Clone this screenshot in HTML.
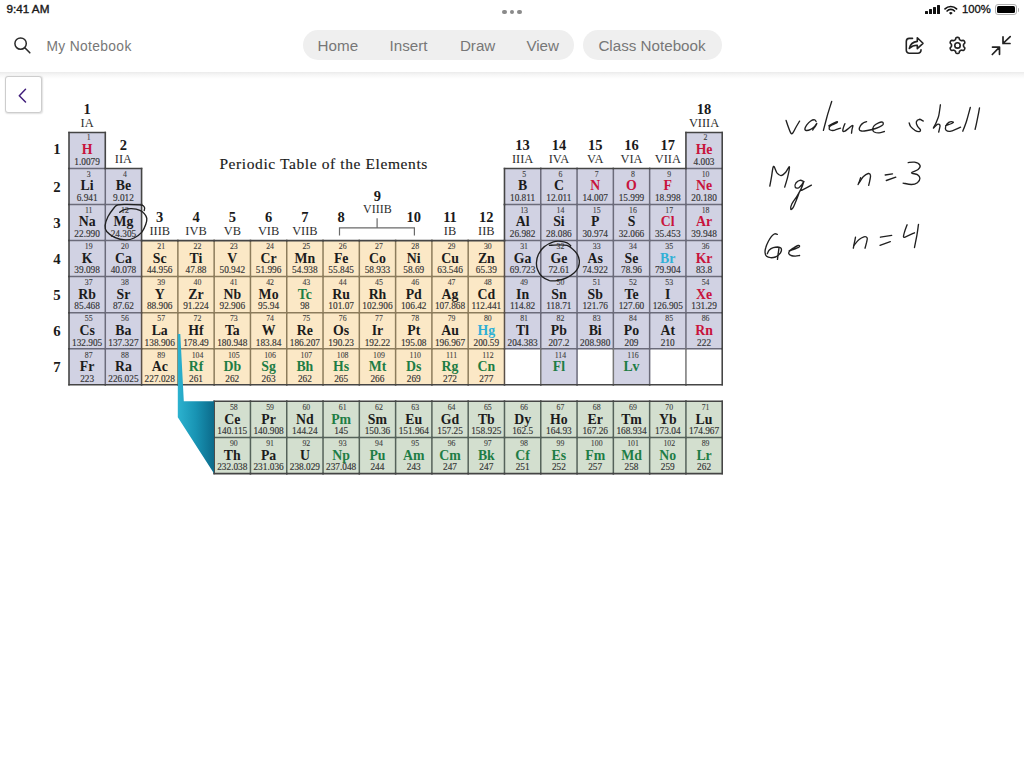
<!DOCTYPE html>
<html><head><meta charset="utf-8">
<style>
html,body{margin:0;padding:0;}
body{width:1024px;height:768px;overflow:hidden;background:#fff;position:relative;font-family:"Liberation Sans",sans-serif;}
.abs{position:absolute;white-space:nowrap;}
#tb{position:absolute;left:0;top:0;width:1024px;height:71px;background:#fff;}
#shadow{position:absolute;left:0;top:71.5px;width:1024px;height:7px;background:linear-gradient(#ebebeb,#f6f6f6 40%,#fff);}
.pill{position:absolute;top:30.3px;height:29.4px;border-radius:15px;background:#efefef;}
.tab{position:absolute;top:36.5px;font-size:15.2px;line-height:18px;color:#777;white-space:nowrap;}
.c{position:absolute;font-family:"Liberation Serif",serif;}
.c .n{position:absolute;left:-8.5px;right:-11.5px;text-align:center;top:1.1px;line-height:10px;font-size:7.8px;color:#404040;-webkit-text-stroke:0.1px #404040;}
.c .s{position:absolute;left:-10px;right:-10px;text-align:center;top:13.1px;line-height:10px;font-size:13.8px;font-weight:bold;}
.c .m{position:absolute;left:-10px;right:-10px;text-align:center;top:24.4px;line-height:10px;font-size:9.3px;color:#333;-webkit-text-stroke:0.15px #333;}
.gn{position:absolute;width:60px;text-align:center;line-height:10px;font-size:14.5px;font-weight:bold;font-family:"Liberation Serif",serif;color:#1a1a1a;}
.gr{position:absolute;width:60px;text-align:center;line-height:10px;font-size:12.4px;font-family:"Liberation Serif",serif;color:#2e2e2e;}
.pn{position:absolute;left:40px;width:34px;text-align:center;line-height:10px;font-size:14.8px;font-weight:bold;font-family:"Liberation Serif",serif;color:#1a1a1a;}
</style></head><body>
<!-- status bar / toolbar -->
<div id="tb"></div>
<div id="shadow"></div>
<div class="abs" style="left:6.5px;top:2.3px;font-size:11.7px;line-height:14px;color:#1a1a1a;-webkit-text-stroke:0.4px #1a1a1a;">9:41 AM</div>
<div class="abs" style="left:501.9px;top:9.5px;width:4.8px;height:4.8px;border-radius:2.4px;background:#8a8a8a"></div>
<div class="abs" style="left:509.6px;top:9.5px;width:4.8px;height:4.8px;border-radius:2.4px;background:#8a8a8a"></div>
<div class="abs" style="left:517.3px;top:9.5px;width:4.8px;height:4.8px;border-radius:2.4px;background:#8a8a8a"></div>
<!-- signal -->
<div class="abs" style="left:925px;top:11px;width:3px;height:3px;background:#111;border-radius:0.5px"></div>
<div class="abs" style="left:929px;top:9px;width:3px;height:5px;background:#111;border-radius:0.5px"></div>
<div class="abs" style="left:933px;top:7px;width:3px;height:7px;background:#111;border-radius:0.5px"></div>
<div class="abs" style="left:937px;top:5px;width:3px;height:9px;background:#111;border-radius:0.5px"></div>
<svg class="abs" style="left:944px;top:5px" width="13.6" height="10.2" viewBox="0 0 16 12">
<path d="M1.2 4.6 A9.5 9.5 0 0 1 14.8 4.6" stroke="#111" stroke-width="1.9" fill="none" stroke-linecap="round"/>
<path d="M3.6 7.1 A6 6 0 0 1 12.4 7.1" stroke="#111" stroke-width="1.9" fill="none" stroke-linecap="round"/>
<path d="M5.8 9.4 L8 11.5 L10.2 9.4 A3 3 0 0 0 5.8 9.4 Z" fill="#111"/>
</svg>
<div class="abs" style="left:962px;top:2.3px;font-size:11.3px;line-height:14px;color:#111;-webkit-text-stroke:0.3px #111;">100%</div>
<div class="abs" style="left:994.6px;top:4.4px;width:20px;height:8.6px;border:1px solid #b0b0b0;border-radius:3px;"></div>
<div class="abs" style="left:996.6px;top:6.4px;width:18px;height:6.6px;background:#000;border-radius:1.5px;"></div>
<div class="abs" style="left:1017.8px;top:7.7px;width:1.5px;height:4px;background:#aaa;border-radius:0 1px 1px 0"></div>
<!-- search -->
<svg class="abs" style="left:12px;top:35px" width="22" height="22" viewBox="0 0 22 22">
<circle cx="8.6" cy="8.6" r="5.7" stroke="#2a2a2a" stroke-width="1.5" fill="none"/>
<path d="M12.8 12.8 L17.8 17.8" stroke="#2a2a2a" stroke-width="1.6" stroke-linecap="round"/>
</svg>
<div class="tab" style="left:46.5px;top:38.2px;font-size:13.8px;letter-spacing:0.35px;color:#777">My Notebook</div>
<div class="pill" style="left:303px;width:271px"></div>
<div class="pill" style="left:583.4px;width:138.6px"></div>
<div class="tab" style="left:317.6px">Home</div>
<div class="tab" style="left:389.6px">Insert</div>
<div class="tab" style="left:459.9px">Draw</div>
<div class="tab" style="left:526.4px">View</div>
<div class="tab" style="left:598.4px">Class Notebook</div>
<!-- right icons -->
<svg class="abs" style="left:903px;top:35px" width="24" height="22" viewBox="0 0 24 22">
<path d="M9.5 3.4 H6.3 A3 3 0 0 0 3.3 6.4 V15.3 A3 3 0 0 0 6.3 18.3 H15 A3 3 0 0 0 18 15.3 V14.8" stroke="#222" stroke-width="1.6" fill="none" stroke-linecap="round"/>
<path d="M6.3 13.4 C7.2 9.3 9.5 7.0 14.3 6.4 V2.7 L20.0 8.3 L14.3 13.6 V10.3 C10.8 10.2 8.6 11.3 6.3 13.4 Z" stroke="#222" stroke-width="1.6" fill="none" stroke-linejoin="round"/>
</svg>
<svg class="abs" style="left:947px;top:35px" width="22" height="22" viewBox="0 0 22 22">
<path id="gear" d="M16.45 10.40 L16.45 10.56 L16.47 10.71 L16.48 10.87 L16.51 11.03 L16.55 11.20 L16.60 11.37 L16.66 11.54 L16.74 11.73 L16.86 11.93 L17.26 12.21 L17.65 12.52 L17.75 12.75 L17.79 12.98 L17.81 13.20 L17.80 13.42 L17.77 13.64 L17.72 13.84 L17.65 14.04 L17.57 14.24 L17.47 14.43 L17.36 14.60 L17.23 14.77 L17.09 14.93 L16.94 15.08 L16.77 15.21 L16.58 15.33 L16.38 15.42 L16.16 15.50 L15.91 15.53 L15.45 15.35 L15.00 15.15 L14.77 15.14 L14.57 15.16 L14.38 15.20 L14.21 15.24 L14.05 15.29 L13.90 15.35 L13.75 15.41 L13.61 15.48 L13.48 15.55 L13.34 15.63 L13.21 15.72 L13.08 15.82 L12.96 15.92 L12.83 16.04 L12.71 16.16 L12.59 16.30 L12.47 16.47 L12.36 16.67 L12.31 17.16 L12.24 17.65 L12.08 17.85 L11.91 18.01 L11.72 18.13 L11.53 18.23 L11.33 18.31 L11.13 18.37 L10.92 18.42 L10.71 18.44 L10.50 18.45 L10.29 18.44 L10.08 18.42 L9.87 18.37 L9.67 18.31 L9.47 18.23 L9.28 18.13 L9.09 18.01 L8.92 17.85 L8.76 17.65 L8.69 17.16 L8.64 16.67 L8.53 16.47 L8.41 16.30 L8.29 16.16 L8.17 16.04 L8.04 15.92 L7.92 15.82 L7.79 15.72 L7.66 15.63 L7.53 15.55 L7.39 15.48 L7.25 15.41 L7.10 15.35 L6.95 15.29 L6.79 15.24 L6.62 15.20 L6.43 15.16 L6.23 15.14 L6.00 15.15 L5.55 15.35 L5.09 15.53 L4.84 15.50 L4.62 15.42 L4.42 15.33 L4.23 15.21 L4.06 15.08 L3.91 14.93 L3.77 14.77 L3.64 14.60 L3.53 14.43 L3.43 14.24 L3.35 14.04 L3.28 13.84 L3.23 13.64 L3.20 13.42 L3.19 13.20 L3.21 12.98 L3.25 12.75 L3.35 12.52 L3.74 12.21 L4.14 11.93 L4.26 11.73 L4.34 11.54 L4.40 11.37 L4.45 11.20 L4.49 11.03 L4.52 10.87 L4.53 10.71 L4.55 10.56 L4.55 10.40 L4.55 10.24 L4.53 10.09 L4.52 9.93 L4.49 9.77 L4.45 9.60 L4.40 9.43 L4.34 9.26 L4.26 9.07 L4.14 8.87 L3.74 8.59 L3.35 8.28 L3.25 8.05 L3.21 7.82 L3.19 7.60 L3.20 7.38 L3.23 7.16 L3.28 6.96 L3.35 6.76 L3.43 6.56 L3.53 6.38 L3.64 6.20 L3.77 6.03 L3.91 5.87 L4.06 5.72 L4.23 5.59 L4.42 5.47 L4.62 5.38 L4.84 5.30 L5.09 5.27 L5.55 5.45 L6.00 5.65 L6.23 5.66 L6.43 5.64 L6.62 5.60 L6.79 5.56 L6.95 5.51 L7.10 5.45 L7.25 5.39 L7.39 5.32 L7.52 5.25 L7.66 5.17 L7.79 5.08 L7.92 4.98 L8.04 4.88 L8.17 4.76 L8.29 4.64 L8.41 4.50 L8.53 4.33 L8.64 4.13 L8.69 3.64 L8.76 3.15 L8.92 2.95 L9.09 2.79 L9.28 2.67 L9.47 2.57 L9.67 2.49 L9.87 2.43 L10.08 2.38 L10.29 2.36 L10.50 2.35 L10.71 2.36 L10.92 2.38 L11.13 2.43 L11.33 2.49 L11.53 2.57 L11.72 2.67 L11.91 2.79 L12.08 2.95 L12.24 3.15 L12.31 3.64 L12.36 4.13 L12.47 4.33 L12.59 4.50 L12.71 4.64 L12.83 4.76 L12.96 4.88 L13.08 4.98 L13.21 5.08 L13.34 5.17 L13.48 5.25 L13.61 5.32 L13.75 5.39 L13.90 5.45 L14.05 5.51 L14.21 5.56 L14.38 5.60 L14.57 5.64 L14.77 5.66 L15.00 5.65 L15.45 5.45 L15.91 5.27 L16.16 5.30 L16.38 5.38 L16.58 5.47 L16.77 5.59 L16.94 5.72 L17.09 5.87 L17.23 6.03 L17.36 6.20 L17.47 6.38 L17.57 6.56 L17.65 6.76 L17.72 6.96 L17.77 7.16 L17.80 7.38 L17.81 7.60 L17.79 7.82 L17.75 8.05 L17.65 8.28 L17.26 8.59 L16.86 8.87 L16.74 9.07 L16.66 9.26 L16.60 9.43 L16.55 9.60 L16.51 9.77 L16.48 9.93 L16.47 10.09 L16.45 10.24 Z" stroke-linejoin="round" stroke="#222" stroke-width="1.6" fill="none"/>
<circle cx="10.5" cy="10.4" r="2.7" stroke="#222" stroke-width="1.6" fill="none"/>
</svg>
<svg class="abs" style="left:990px;top:34px" width="24" height="23" viewBox="0 0 24 23">
<path d="M13 2.9 V9.5 H20 M13 9.5 L20.2 2.7" stroke="#222" stroke-width="1.7" fill="none" stroke-linecap="round" stroke-linejoin="round"/>
<path d="M2.5 13.1 H9.5 V20.3 M9.5 13.1 L2.3 20.5" stroke="#222" stroke-width="1.7" fill="none" stroke-linecap="round" stroke-linejoin="round"/>
</svg>
<!-- back button -->
<div class="abs" style="left:4.5px;top:76.3px;width:37px;height:37px;box-sizing:border-box;border:1px solid #cdcdcd;border-radius:3px;background:#fff;box-shadow:0.5px 0.5px 1.5px rgba(0,0,0,0.12)"></div>
<svg class="abs" style="left:16px;top:87px" width="12" height="16" viewBox="0 0 12 16">
<path d="M9.5 2.3 L3.3 8.7 L9.5 15" stroke="#3f1c7a" stroke-width="1.45" fill="none" stroke-linecap="round" stroke-linejoin="round"/>
</svg>
<!-- periodic table -->
<div class="abs" style="left:219.4px;top:155.1px;font-family:'Liberation Serif',serif;font-size:15.5px;line-height:18px;letter-spacing:0.6px;color:#1a1a1a;-webkit-text-stroke:0.15px #1a1a1a;">Periodic Table of the Elements</div>
<div class="gn" style="left:57.14px;top:103.90px">1</div>
<div class="gr" style="left:57.14px;top:117.60px">IA</div>
<div class="gn" style="left:93.43px;top:139.93px">2</div>
<div class="gr" style="left:93.43px;top:153.63px">IIA</div>
<div class="gn" style="left:129.72px;top:211.99px">3</div>
<div class="gr" style="left:129.72px;top:225.69px">IIIB</div>
<div class="gn" style="left:166.02px;top:211.99px">4</div>
<div class="gr" style="left:166.02px;top:225.69px">IVB</div>
<div class="gn" style="left:202.31px;top:211.99px">5</div>
<div class="gr" style="left:202.31px;top:225.69px">VB</div>
<div class="gn" style="left:238.59px;top:211.99px">6</div>
<div class="gr" style="left:238.59px;top:225.69px">VIB</div>
<div class="gn" style="left:274.88px;top:211.99px">7</div>
<div class="gr" style="left:274.88px;top:225.69px">VIIB</div>
<div class="gn" style="left:311.17px;top:211.99px">8</div>
<div class="gn" style="left:383.75px;top:211.99px">10</div>
<div class="gn" style="left:420.04px;top:211.99px">11</div>
<div class="gr" style="left:420.04px;top:225.69px">IB</div>
<div class="gn" style="left:456.33px;top:211.99px">12</div>
<div class="gr" style="left:456.33px;top:225.69px">IIB</div>
<div class="gn" style="left:492.62px;top:139.93px">13</div>
<div class="gr" style="left:492.62px;top:153.63px">IIIA</div>
<div class="gn" style="left:528.91px;top:139.93px">14</div>
<div class="gr" style="left:528.91px;top:153.63px">IVA</div>
<div class="gn" style="left:565.20px;top:139.93px">15</div>
<div class="gr" style="left:565.20px;top:153.63px">VA</div>
<div class="gn" style="left:601.50px;top:139.93px">16</div>
<div class="gr" style="left:601.50px;top:153.63px">VIA</div>
<div class="gn" style="left:637.78px;top:139.93px">17</div>
<div class="gr" style="left:637.78px;top:153.63px">VIIA</div>
<div class="gn" style="left:674.07px;top:103.90px">18</div>
<div class="gr" style="left:674.07px;top:117.60px">VIIIA</div>
<div class="gn" style="left:347.46px;top:191.09px">9</div>
<div class="gr" style="left:347.46px;top:204.29px;font-size:12.0px">VIIIB</div>
<div class="pn" style="top:143.50px">1</div>
<div class="pn" style="top:181.83px">2</div>
<div class="pn" style="top:217.86px">3</div>
<div class="pn" style="top:253.89px">4</div>
<div class="pn" style="top:289.92px">5</div>
<div class="pn" style="top:325.95px">6</div>
<div class="pn" style="top:361.98px">7</div>
<div class="c" style="left:69.00px;top:132.50px;width:36.29px;height:36.03px;background:#d1d2e3"><div class="n" style="top:0.90px">1</div><div class="s" style="color:#c8143c;top:12.20px">H</div><div class="m" style="top:24.10px">1.0079</div></div>
<div class="c" style="left:685.93px;top:132.50px;width:36.29px;height:36.03px;background:#d1d2e3"><div class="n" style="top:0.90px">2</div><div class="s" style="color:#c8143c;top:12.20px">He</div><div class="m" style="top:24.10px">4.003</div></div>
<div class="c" style="left:69.00px;top:168.53px;width:36.29px;height:36.03px;background:#d1d2e3"><div class="n" style="top:1.08px">3</div><div class="s" style="color:#1c1c1c;top:12.45px">Li</div><div class="m" style="top:24.28px">6.941</div></div>
<div class="c" style="left:105.29px;top:168.53px;width:36.29px;height:36.03px;background:#d1d2e3"><div class="n" style="top:1.08px">4</div><div class="s" style="color:#1c1c1c;top:12.45px">Be</div><div class="m" style="top:24.28px">9.012</div></div>
<div class="c" style="left:504.48px;top:168.53px;width:36.29px;height:36.03px;background:#d1d2e3"><div class="n" style="top:1.08px">5</div><div class="s" style="color:#1c1c1c;top:12.45px">B</div><div class="m" style="top:24.28px">10.811</div></div>
<div class="c" style="left:540.77px;top:168.53px;width:36.29px;height:36.03px;background:#d1d2e3"><div class="n" style="top:1.08px">6</div><div class="s" style="color:#1c1c1c;top:12.45px">C</div><div class="m" style="top:24.28px">12.011</div></div>
<div class="c" style="left:577.06px;top:168.53px;width:36.29px;height:36.03px;background:#d1d2e3"><div class="n" style="top:1.08px">7</div><div class="s" style="color:#c8143c;top:12.45px">N</div><div class="m" style="top:24.28px">14.007</div></div>
<div class="c" style="left:613.35px;top:168.53px;width:36.29px;height:36.03px;background:#d1d2e3"><div class="n" style="top:1.08px">8</div><div class="s" style="color:#c8143c;top:12.45px">O</div><div class="m" style="top:24.28px">15.999</div></div>
<div class="c" style="left:649.64px;top:168.53px;width:36.29px;height:36.03px;background:#d1d2e3"><div class="n" style="top:1.08px">9</div><div class="s" style="color:#c8143c;top:12.45px">F</div><div class="m" style="top:24.28px">18.998</div></div>
<div class="c" style="left:685.93px;top:168.53px;width:36.29px;height:36.03px;background:#d1d2e3"><div class="n" style="top:1.08px">10</div><div class="s" style="color:#c8143c;top:12.45px">Ne</div><div class="m" style="top:24.28px">20.180</div></div>
<div class="c" style="left:69.00px;top:204.56px;width:36.29px;height:36.03px;background:#d1d2e3"><div class="n" style="top:1.26px">11</div><div class="s" style="color:#1c1c1c;top:12.70px">Na</div><div class="m" style="top:24.46px">22.990</div></div>
<div class="c" style="left:105.29px;top:204.56px;width:36.29px;height:36.03px;background:#d1d2e3"><div class="n" style="top:1.26px">12</div><div class="s" style="color:#1c1c1c;top:12.70px">Mg</div><div class="m" style="top:24.46px">24.305</div></div>
<div class="c" style="left:504.48px;top:204.56px;width:36.29px;height:36.03px;background:#d1d2e3"><div class="n" style="top:1.26px">13</div><div class="s" style="color:#1c1c1c;top:12.70px">Al</div><div class="m" style="top:24.46px">26.982</div></div>
<div class="c" style="left:540.77px;top:204.56px;width:36.29px;height:36.03px;background:#d1d2e3"><div class="n" style="top:1.26px">14</div><div class="s" style="color:#1c1c1c;top:12.70px">Si</div><div class="m" style="top:24.46px">28.086</div></div>
<div class="c" style="left:577.06px;top:204.56px;width:36.29px;height:36.03px;background:#d1d2e3"><div class="n" style="top:1.26px">15</div><div class="s" style="color:#1c1c1c;top:12.70px">P</div><div class="m" style="top:24.46px">30.974</div></div>
<div class="c" style="left:613.35px;top:204.56px;width:36.29px;height:36.03px;background:#d1d2e3"><div class="n" style="top:1.26px">16</div><div class="s" style="color:#1c1c1c;top:12.70px">S</div><div class="m" style="top:24.46px">32.066</div></div>
<div class="c" style="left:649.64px;top:204.56px;width:36.29px;height:36.03px;background:#d1d2e3"><div class="n" style="top:1.26px">17</div><div class="s" style="color:#c8143c;top:12.70px">Cl</div><div class="m" style="top:24.46px">35.453</div></div>
<div class="c" style="left:685.93px;top:204.56px;width:36.29px;height:36.03px;background:#d1d2e3"><div class="n" style="top:1.26px">18</div><div class="s" style="color:#c8143c;top:12.70px">Ar</div><div class="m" style="top:24.46px">39.948</div></div>
<div class="c" style="left:69.00px;top:240.59px;width:36.29px;height:36.03px;background:#d1d2e3"><div class="n" style="top:1.44px">19</div><div class="s" style="color:#1c1c1c;top:12.95px">K</div><div class="m" style="top:24.64px">39.098</div></div>
<div class="c" style="left:105.29px;top:240.59px;width:36.29px;height:36.03px;background:#d1d2e3"><div class="n" style="top:1.44px">20</div><div class="s" style="color:#1c1c1c;top:12.95px">Ca</div><div class="m" style="top:24.64px">40.078</div></div>
<div class="c" style="left:141.58px;top:240.59px;width:36.29px;height:36.03px;background:#fbe8c6"><div class="n" style="top:1.44px">21</div><div class="s" style="color:#1c1c1c;top:12.95px">Sc</div><div class="m" style="top:24.64px">44.956</div></div>
<div class="c" style="left:177.87px;top:240.59px;width:36.29px;height:36.03px;background:#fbe8c6"><div class="n" style="top:1.44px">22</div><div class="s" style="color:#1c1c1c;top:12.95px">Ti</div><div class="m" style="top:24.64px">47.88</div></div>
<div class="c" style="left:214.16px;top:240.59px;width:36.29px;height:36.03px;background:#fbe8c6"><div class="n" style="top:1.44px">23</div><div class="s" style="color:#1c1c1c;top:12.95px">V</div><div class="m" style="top:24.64px">50.942</div></div>
<div class="c" style="left:250.45px;top:240.59px;width:36.29px;height:36.03px;background:#fbe8c6"><div class="n" style="top:1.44px">24</div><div class="s" style="color:#1c1c1c;top:12.95px">Cr</div><div class="m" style="top:24.64px">51.996</div></div>
<div class="c" style="left:286.74px;top:240.59px;width:36.29px;height:36.03px;background:#fbe8c6"><div class="n" style="top:1.44px">25</div><div class="s" style="color:#1c1c1c;top:12.95px">Mn</div><div class="m" style="top:24.64px">54.938</div></div>
<div class="c" style="left:323.03px;top:240.59px;width:36.29px;height:36.03px;background:#fbe8c6"><div class="n" style="top:1.44px">26</div><div class="s" style="color:#1c1c1c;top:12.95px">Fe</div><div class="m" style="top:24.64px">55.845</div></div>
<div class="c" style="left:359.32px;top:240.59px;width:36.29px;height:36.03px;background:#fbe8c6"><div class="n" style="top:1.44px">27</div><div class="s" style="color:#1c1c1c;top:12.95px">Co</div><div class="m" style="top:24.64px">58.933</div></div>
<div class="c" style="left:395.61px;top:240.59px;width:36.29px;height:36.03px;background:#fbe8c6"><div class="n" style="top:1.44px">28</div><div class="s" style="color:#1c1c1c;top:12.95px">Ni</div><div class="m" style="top:24.64px">58.69</div></div>
<div class="c" style="left:431.90px;top:240.59px;width:36.29px;height:36.03px;background:#fbe8c6"><div class="n" style="top:1.44px">29</div><div class="s" style="color:#1c1c1c;top:12.95px">Cu</div><div class="m" style="top:24.64px">63.546</div></div>
<div class="c" style="left:468.19px;top:240.59px;width:36.29px;height:36.03px;background:#fbe8c6"><div class="n" style="top:1.44px">30</div><div class="s" style="color:#1c1c1c;top:12.95px">Zn</div><div class="m" style="top:24.64px">65.39</div></div>
<div class="c" style="left:504.48px;top:240.59px;width:36.29px;height:36.03px;background:#d1d2e3"><div class="n" style="top:1.44px">31</div><div class="s" style="color:#1c1c1c;top:12.95px">Ga</div><div class="m" style="top:24.64px">69.723</div></div>
<div class="c" style="left:540.77px;top:240.59px;width:36.29px;height:36.03px;background:#d1d2e3"><div class="n" style="top:1.44px">32</div><div class="s" style="color:#1c1c1c;top:12.95px">Ge</div><div class="m" style="top:24.64px">72.61</div></div>
<div class="c" style="left:577.06px;top:240.59px;width:36.29px;height:36.03px;background:#d1d2e3"><div class="n" style="top:1.44px">33</div><div class="s" style="color:#1c1c1c;top:12.95px">As</div><div class="m" style="top:24.64px">74.922</div></div>
<div class="c" style="left:613.35px;top:240.59px;width:36.29px;height:36.03px;background:#d1d2e3"><div class="n" style="top:1.44px">34</div><div class="s" style="color:#1c1c1c;top:12.95px">Se</div><div class="m" style="top:24.64px">78.96</div></div>
<div class="c" style="left:649.64px;top:240.59px;width:36.29px;height:36.03px;background:#d1d2e3"><div class="n" style="top:1.44px">35</div><div class="s" style="color:#2fb0d6;top:12.95px">Br</div><div class="m" style="top:24.64px">79.904</div></div>
<div class="c" style="left:685.93px;top:240.59px;width:36.29px;height:36.03px;background:#d1d2e3"><div class="n" style="top:1.44px">36</div><div class="s" style="color:#c8143c;top:12.95px">Kr</div><div class="m" style="top:24.64px">83.8</div></div>
<div class="c" style="left:69.00px;top:276.62px;width:36.29px;height:36.03px;background:#d1d2e3"><div class="n" style="top:1.62px">37</div><div class="s" style="color:#1c1c1c;top:13.20px">Rb</div><div class="m" style="top:24.82px">85.468</div></div>
<div class="c" style="left:105.29px;top:276.62px;width:36.29px;height:36.03px;background:#d1d2e3"><div class="n" style="top:1.62px">38</div><div class="s" style="color:#1c1c1c;top:13.20px">Sr</div><div class="m" style="top:24.82px">87.62</div></div>
<div class="c" style="left:141.58px;top:276.62px;width:36.29px;height:36.03px;background:#fbe8c6"><div class="n" style="top:1.62px">39</div><div class="s" style="color:#1c1c1c;top:13.20px">Y</div><div class="m" style="top:24.82px">88.906</div></div>
<div class="c" style="left:177.87px;top:276.62px;width:36.29px;height:36.03px;background:#fbe8c6"><div class="n" style="top:1.62px">40</div><div class="s" style="color:#1c1c1c;top:13.20px">Zr</div><div class="m" style="top:24.82px">91.224</div></div>
<div class="c" style="left:214.16px;top:276.62px;width:36.29px;height:36.03px;background:#fbe8c6"><div class="n" style="top:1.62px">41</div><div class="s" style="color:#1c1c1c;top:13.20px">Nb</div><div class="m" style="top:24.82px">92.906</div></div>
<div class="c" style="left:250.45px;top:276.62px;width:36.29px;height:36.03px;background:#fbe8c6"><div class="n" style="top:1.62px">42</div><div class="s" style="color:#1c1c1c;top:13.20px">Mo</div><div class="m" style="top:24.82px">95.94</div></div>
<div class="c" style="left:286.74px;top:276.62px;width:36.29px;height:36.03px;background:#fbe8c6"><div class="n" style="top:1.62px">43</div><div class="s" style="color:#1e7d45;top:13.20px">Tc</div><div class="m" style="top:24.82px">98</div></div>
<div class="c" style="left:323.03px;top:276.62px;width:36.29px;height:36.03px;background:#fbe8c6"><div class="n" style="top:1.62px">44</div><div class="s" style="color:#1c1c1c;top:13.20px">Ru</div><div class="m" style="top:24.82px">101.07</div></div>
<div class="c" style="left:359.32px;top:276.62px;width:36.29px;height:36.03px;background:#fbe8c6"><div class="n" style="top:1.62px">45</div><div class="s" style="color:#1c1c1c;top:13.20px">Rh</div><div class="m" style="top:24.82px">102.906</div></div>
<div class="c" style="left:395.61px;top:276.62px;width:36.29px;height:36.03px;background:#fbe8c6"><div class="n" style="top:1.62px">46</div><div class="s" style="color:#1c1c1c;top:13.20px">Pd</div><div class="m" style="top:24.82px">106.42</div></div>
<div class="c" style="left:431.90px;top:276.62px;width:36.29px;height:36.03px;background:#fbe8c6"><div class="n" style="top:1.62px">47</div><div class="s" style="color:#1c1c1c;top:13.20px">Ag</div><div class="m" style="top:24.82px">107.868</div></div>
<div class="c" style="left:468.19px;top:276.62px;width:36.29px;height:36.03px;background:#fbe8c6"><div class="n" style="top:1.62px">48</div><div class="s" style="color:#1c1c1c;top:13.20px">Cd</div><div class="m" style="top:24.82px">112.441</div></div>
<div class="c" style="left:504.48px;top:276.62px;width:36.29px;height:36.03px;background:#d1d2e3"><div class="n" style="top:1.62px">49</div><div class="s" style="color:#1c1c1c;top:13.20px">In</div><div class="m" style="top:24.82px">114.82</div></div>
<div class="c" style="left:540.77px;top:276.62px;width:36.29px;height:36.03px;background:#d1d2e3"><div class="n" style="top:1.62px">50</div><div class="s" style="color:#1c1c1c;top:13.20px">Sn</div><div class="m" style="top:24.82px">118.71</div></div>
<div class="c" style="left:577.06px;top:276.62px;width:36.29px;height:36.03px;background:#d1d2e3"><div class="n" style="top:1.62px">51</div><div class="s" style="color:#1c1c1c;top:13.20px">Sb</div><div class="m" style="top:24.82px">121.76</div></div>
<div class="c" style="left:613.35px;top:276.62px;width:36.29px;height:36.03px;background:#d1d2e3"><div class="n" style="top:1.62px">52</div><div class="s" style="color:#1c1c1c;top:13.20px">Te</div><div class="m" style="top:24.82px">127.60</div></div>
<div class="c" style="left:649.64px;top:276.62px;width:36.29px;height:36.03px;background:#d1d2e3"><div class="n" style="top:1.62px">53</div><div class="s" style="color:#1c1c1c;top:13.20px">I</div><div class="m" style="top:24.82px">126.905</div></div>
<div class="c" style="left:685.93px;top:276.62px;width:36.29px;height:36.03px;background:#d1d2e3"><div class="n" style="top:1.62px">54</div><div class="s" style="color:#c8143c;top:13.20px">Xe</div><div class="m" style="top:24.82px">131.29</div></div>
<div class="c" style="left:69.00px;top:312.65px;width:36.29px;height:36.03px;background:#d1d2e3"><div class="n" style="top:1.80px">55</div><div class="s" style="color:#1c1c1c;top:13.45px">Cs</div><div class="m" style="top:25.00px">132.905</div></div>
<div class="c" style="left:105.29px;top:312.65px;width:36.29px;height:36.03px;background:#d1d2e3"><div class="n" style="top:1.80px">56</div><div class="s" style="color:#1c1c1c;top:13.45px">Ba</div><div class="m" style="top:25.00px">137.327</div></div>
<div class="c" style="left:141.58px;top:312.65px;width:36.29px;height:36.03px;background:#fbe8c6"><div class="n" style="top:1.80px">57</div><div class="s" style="color:#1c1c1c;top:13.45px">La</div><div class="m" style="top:25.00px">138.906</div></div>
<div class="c" style="left:177.87px;top:312.65px;width:36.29px;height:36.03px;background:#fbe8c6"><div class="n" style="top:1.80px">72</div><div class="s" style="color:#1c1c1c;top:13.45px">Hf</div><div class="m" style="top:25.00px">178.49</div></div>
<div class="c" style="left:214.16px;top:312.65px;width:36.29px;height:36.03px;background:#fbe8c6"><div class="n" style="top:1.80px">73</div><div class="s" style="color:#1c1c1c;top:13.45px">Ta</div><div class="m" style="top:25.00px">180.948</div></div>
<div class="c" style="left:250.45px;top:312.65px;width:36.29px;height:36.03px;background:#fbe8c6"><div class="n" style="top:1.80px">74</div><div class="s" style="color:#1c1c1c;top:13.45px">W</div><div class="m" style="top:25.00px">183.84</div></div>
<div class="c" style="left:286.74px;top:312.65px;width:36.29px;height:36.03px;background:#fbe8c6"><div class="n" style="top:1.80px">75</div><div class="s" style="color:#1c1c1c;top:13.45px">Re</div><div class="m" style="top:25.00px">186.207</div></div>
<div class="c" style="left:323.03px;top:312.65px;width:36.29px;height:36.03px;background:#fbe8c6"><div class="n" style="top:1.80px">76</div><div class="s" style="color:#1c1c1c;top:13.45px">Os</div><div class="m" style="top:25.00px">190.23</div></div>
<div class="c" style="left:359.32px;top:312.65px;width:36.29px;height:36.03px;background:#fbe8c6"><div class="n" style="top:1.80px">77</div><div class="s" style="color:#1c1c1c;top:13.45px">Ir</div><div class="m" style="top:25.00px">192.22</div></div>
<div class="c" style="left:395.61px;top:312.65px;width:36.29px;height:36.03px;background:#fbe8c6"><div class="n" style="top:1.80px">78</div><div class="s" style="color:#1c1c1c;top:13.45px">Pt</div><div class="m" style="top:25.00px">195.08</div></div>
<div class="c" style="left:431.90px;top:312.65px;width:36.29px;height:36.03px;background:#fbe8c6"><div class="n" style="top:1.80px">79</div><div class="s" style="color:#1c1c1c;top:13.45px">Au</div><div class="m" style="top:25.00px">196.967</div></div>
<div class="c" style="left:468.19px;top:312.65px;width:36.29px;height:36.03px;background:#fbe8c6"><div class="n" style="top:1.80px">80</div><div class="s" style="color:#2fb0d6;top:13.45px">Hg</div><div class="m" style="top:25.00px">200.59</div></div>
<div class="c" style="left:504.48px;top:312.65px;width:36.29px;height:36.03px;background:#d1d2e3"><div class="n" style="top:1.80px">81</div><div class="s" style="color:#1c1c1c;top:13.45px">Tl</div><div class="m" style="top:25.00px">204.383</div></div>
<div class="c" style="left:540.77px;top:312.65px;width:36.29px;height:36.03px;background:#d1d2e3"><div class="n" style="top:1.80px">82</div><div class="s" style="color:#1c1c1c;top:13.45px">Pb</div><div class="m" style="top:25.00px">207.2</div></div>
<div class="c" style="left:577.06px;top:312.65px;width:36.29px;height:36.03px;background:#d1d2e3"><div class="n" style="top:1.80px">83</div><div class="s" style="color:#1c1c1c;top:13.45px">Bi</div><div class="m" style="top:25.00px">208.980</div></div>
<div class="c" style="left:613.35px;top:312.65px;width:36.29px;height:36.03px;background:#d1d2e3"><div class="n" style="top:1.80px">84</div><div class="s" style="color:#1c1c1c;top:13.45px">Po</div><div class="m" style="top:25.00px">209</div></div>
<div class="c" style="left:649.64px;top:312.65px;width:36.29px;height:36.03px;background:#d1d2e3"><div class="n" style="top:1.80px">85</div><div class="s" style="color:#1c1c1c;top:13.45px">At</div><div class="m" style="top:25.00px">210</div></div>
<div class="c" style="left:685.93px;top:312.65px;width:36.29px;height:36.03px;background:#d1d2e3"><div class="n" style="top:1.80px">86</div><div class="s" style="color:#c8143c;top:13.45px">Rn</div><div class="m" style="top:25.00px">222</div></div>
<div class="c" style="left:69.00px;top:348.68px;width:36.29px;height:36.03px;background:#d1d2e3"><div class="n" style="top:1.98px">87</div><div class="s" style="color:#1c1c1c;top:13.70px">Fr</div><div class="m" style="top:25.18px">223</div></div>
<div class="c" style="left:105.29px;top:348.68px;width:36.29px;height:36.03px;background:#d1d2e3"><div class="n" style="top:1.98px">88</div><div class="s" style="color:#1c1c1c;top:13.70px">Ra</div><div class="m" style="top:25.18px">226.025</div></div>
<div class="c" style="left:141.58px;top:348.68px;width:36.29px;height:36.03px;background:#fbe8c6"><div class="n" style="top:1.98px">89</div><div class="s" style="color:#1c1c1c;top:13.70px">Ac</div><div class="m" style="top:25.18px">227.028</div></div>
<div class="c" style="left:177.87px;top:348.68px;width:36.29px;height:36.03px;background:#fbe8c6"><div class="n" style="top:1.98px">104</div><div class="s" style="color:#1e7d45;top:13.70px">Rf</div><div class="m" style="top:25.18px">261</div></div>
<div class="c" style="left:214.16px;top:348.68px;width:36.29px;height:36.03px;background:#fbe8c6"><div class="n" style="top:1.98px">105</div><div class="s" style="color:#1e7d45;top:13.70px">Db</div><div class="m" style="top:25.18px">262</div></div>
<div class="c" style="left:250.45px;top:348.68px;width:36.29px;height:36.03px;background:#fbe8c6"><div class="n" style="top:1.98px">106</div><div class="s" style="color:#1e7d45;top:13.70px">Sg</div><div class="m" style="top:25.18px">263</div></div>
<div class="c" style="left:286.74px;top:348.68px;width:36.29px;height:36.03px;background:#fbe8c6"><div class="n" style="top:1.98px">107</div><div class="s" style="color:#1e7d45;top:13.70px">Bh</div><div class="m" style="top:25.18px">262</div></div>
<div class="c" style="left:323.03px;top:348.68px;width:36.29px;height:36.03px;background:#fbe8c6"><div class="n" style="top:1.98px">108</div><div class="s" style="color:#1e7d45;top:13.70px">Hs</div><div class="m" style="top:25.18px">265</div></div>
<div class="c" style="left:359.32px;top:348.68px;width:36.29px;height:36.03px;background:#fbe8c6"><div class="n" style="top:1.98px">109</div><div class="s" style="color:#1e7d45;top:13.70px">Mt</div><div class="m" style="top:25.18px">266</div></div>
<div class="c" style="left:395.61px;top:348.68px;width:36.29px;height:36.03px;background:#fbe8c6"><div class="n" style="top:1.98px">110</div><div class="s" style="color:#1e7d45;top:13.70px">Ds</div><div class="m" style="top:25.18px">269</div></div>
<div class="c" style="left:431.90px;top:348.68px;width:36.29px;height:36.03px;background:#fbe8c6"><div class="n" style="top:1.98px">111</div><div class="s" style="color:#1e7d45;top:13.70px">Rg</div><div class="m" style="top:25.18px">272</div></div>
<div class="c" style="left:468.19px;top:348.68px;width:36.29px;height:36.03px;background:#fbe8c6"><div class="n" style="top:1.98px">112</div><div class="s" style="color:#1e7d45;top:13.70px">Cn</div><div class="m" style="top:25.18px">277</div></div>
<div class="c" style="left:504.48px;top:348.68px;width:36.29px;height:36.03px;background:#ffffff"></div>
<div class="c" style="left:540.77px;top:348.68px;width:36.29px;height:36.03px;background:#d1d2e3"><div class="n" style="top:1.98px">114</div><div class="s" style="color:#1e7d45;top:13.70px">Fl</div></div>
<div class="c" style="left:577.06px;top:348.68px;width:36.29px;height:36.03px;background:#ffffff"></div>
<div class="c" style="left:613.35px;top:348.68px;width:36.29px;height:36.03px;background:#d1d2e3"><div class="n" style="top:1.98px">116</div><div class="s" style="color:#1e7d45;top:13.70px">Lv</div></div>
<div class="c" style="left:649.64px;top:348.68px;width:36.29px;height:36.03px;background:#ffffff"></div>
<div class="c" style="left:685.93px;top:348.68px;width:36.29px;height:36.03px;background:#ffffff"></div>
<div class="c" style="left:214.16px;top:401.30px;width:36.29px;height:36.15px;background:#d3dfcf"><div class="n" style="top:1.71px">58</div><div class="s" style="color:#1c1c1c;top:13.32px">Ce</div><div class="m" style="top:24.91px">140.115</div></div>
<div class="c" style="left:250.45px;top:401.30px;width:36.29px;height:36.15px;background:#d3dfcf"><div class="n" style="top:1.71px">59</div><div class="s" style="color:#1c1c1c;top:13.32px">Pr</div><div class="m" style="top:24.91px">140.908</div></div>
<div class="c" style="left:286.74px;top:401.30px;width:36.29px;height:36.15px;background:#d3dfcf"><div class="n" style="top:1.71px">60</div><div class="s" style="color:#1c1c1c;top:13.32px">Nd</div><div class="m" style="top:24.91px">144.24</div></div>
<div class="c" style="left:323.03px;top:401.30px;width:36.29px;height:36.15px;background:#d3dfcf"><div class="n" style="top:1.71px">61</div><div class="s" style="color:#1e7d45;top:13.32px">Pm</div><div class="m" style="top:24.91px">145</div></div>
<div class="c" style="left:359.32px;top:401.30px;width:36.29px;height:36.15px;background:#d3dfcf"><div class="n" style="top:1.71px">62</div><div class="s" style="color:#1c1c1c;top:13.32px">Sm</div><div class="m" style="top:24.91px">150.36</div></div>
<div class="c" style="left:395.61px;top:401.30px;width:36.29px;height:36.15px;background:#d3dfcf"><div class="n" style="top:1.71px">63</div><div class="s" style="color:#1c1c1c;top:13.32px">Eu</div><div class="m" style="top:24.91px">151.964</div></div>
<div class="c" style="left:431.90px;top:401.30px;width:36.29px;height:36.15px;background:#d3dfcf"><div class="n" style="top:1.71px">64</div><div class="s" style="color:#1c1c1c;top:13.32px">Gd</div><div class="m" style="top:24.91px">157.25</div></div>
<div class="c" style="left:468.19px;top:401.30px;width:36.29px;height:36.15px;background:#d3dfcf"><div class="n" style="top:1.71px">65</div><div class="s" style="color:#1c1c1c;top:13.32px">Tb</div><div class="m" style="top:24.91px">158.925</div></div>
<div class="c" style="left:504.48px;top:401.30px;width:36.29px;height:36.15px;background:#d3dfcf"><div class="n" style="top:1.71px">66</div><div class="s" style="color:#1c1c1c;top:13.32px">Dy</div><div class="m" style="top:24.91px">162.5</div></div>
<div class="c" style="left:540.77px;top:401.30px;width:36.29px;height:36.15px;background:#d3dfcf"><div class="n" style="top:1.71px">67</div><div class="s" style="color:#1c1c1c;top:13.32px">Ho</div><div class="m" style="top:24.91px">164.93</div></div>
<div class="c" style="left:577.06px;top:401.30px;width:36.29px;height:36.15px;background:#d3dfcf"><div class="n" style="top:1.71px">68</div><div class="s" style="color:#1c1c1c;top:13.32px">Er</div><div class="m" style="top:24.91px">167.26</div></div>
<div class="c" style="left:613.35px;top:401.30px;width:36.29px;height:36.15px;background:#d3dfcf"><div class="n" style="top:1.71px">69</div><div class="s" style="color:#1c1c1c;top:13.32px">Tm</div><div class="m" style="top:24.91px">168.934</div></div>
<div class="c" style="left:649.64px;top:401.30px;width:36.29px;height:36.15px;background:#d3dfcf"><div class="n" style="top:1.71px">70</div><div class="s" style="color:#1c1c1c;top:13.32px">Yb</div><div class="m" style="top:24.91px">173.04</div></div>
<div class="c" style="left:685.93px;top:401.30px;width:36.29px;height:36.15px;background:#d3dfcf"><div class="n" style="top:1.71px">71</div><div class="s" style="color:#1c1c1c;top:13.32px">Lu</div><div class="m" style="top:24.91px">174.967</div></div>
<div class="c" style="left:214.16px;top:437.45px;width:36.29px;height:36.15px;background:#d3dfcf"><div class="n" style="top:1.71px">90</div><div class="s" style="color:#1c1c1c;top:13.32px">Th</div><div class="m" style="top:24.91px">232.038</div></div>
<div class="c" style="left:250.45px;top:437.45px;width:36.29px;height:36.15px;background:#d3dfcf"><div class="n" style="top:1.71px">91</div><div class="s" style="color:#1c1c1c;top:13.32px">Pa</div><div class="m" style="top:24.91px">231.036</div></div>
<div class="c" style="left:286.74px;top:437.45px;width:36.29px;height:36.15px;background:#d3dfcf"><div class="n" style="top:1.71px">92</div><div class="s" style="color:#1c1c1c;top:13.32px">U</div><div class="m" style="top:24.91px">238.029</div></div>
<div class="c" style="left:323.03px;top:437.45px;width:36.29px;height:36.15px;background:#d3dfcf"><div class="n" style="top:1.71px">93</div><div class="s" style="color:#1e7d45;top:13.32px">Np</div><div class="m" style="top:24.91px">237.048</div></div>
<div class="c" style="left:359.32px;top:437.45px;width:36.29px;height:36.15px;background:#d3dfcf"><div class="n" style="top:1.71px">94</div><div class="s" style="color:#1e7d45;top:13.32px">Pu</div><div class="m" style="top:24.91px">244</div></div>
<div class="c" style="left:395.61px;top:437.45px;width:36.29px;height:36.15px;background:#d3dfcf"><div class="n" style="top:1.71px">95</div><div class="s" style="color:#1e7d45;top:13.32px">Am</div><div class="m" style="top:24.91px">243</div></div>
<div class="c" style="left:431.90px;top:437.45px;width:36.29px;height:36.15px;background:#d3dfcf"><div class="n" style="top:1.71px">96</div><div class="s" style="color:#1e7d45;top:13.32px">Cm</div><div class="m" style="top:24.91px">247</div></div>
<div class="c" style="left:468.19px;top:437.45px;width:36.29px;height:36.15px;background:#d3dfcf"><div class="n" style="top:1.71px">97</div><div class="s" style="color:#1e7d45;top:13.32px">Bk</div><div class="m" style="top:24.91px">247</div></div>
<div class="c" style="left:504.48px;top:437.45px;width:36.29px;height:36.15px;background:#d3dfcf"><div class="n" style="top:1.71px">98</div><div class="s" style="color:#1e7d45;top:13.32px">Cf</div><div class="m" style="top:24.91px">251</div></div>
<div class="c" style="left:540.77px;top:437.45px;width:36.29px;height:36.15px;background:#d3dfcf"><div class="n" style="top:1.71px">99</div><div class="s" style="color:#1e7d45;top:13.32px">Es</div><div class="m" style="top:24.91px">252</div></div>
<div class="c" style="left:577.06px;top:437.45px;width:36.29px;height:36.15px;background:#d3dfcf"><div class="n" style="top:1.71px">100</div><div class="s" style="color:#1e7d45;top:13.32px">Fm</div><div class="m" style="top:24.91px">257</div></div>
<div class="c" style="left:613.35px;top:437.45px;width:36.29px;height:36.15px;background:#d3dfcf"><div class="n" style="top:1.71px">101</div><div class="s" style="color:#1e7d45;top:13.32px">Md</div><div class="m" style="top:24.91px">258</div></div>
<div class="c" style="left:649.64px;top:437.45px;width:36.29px;height:36.15px;background:#d3dfcf"><div class="n" style="top:1.71px">102</div><div class="s" style="color:#1e7d45;top:13.32px">No</div><div class="m" style="top:24.91px">259</div></div>
<div class="c" style="left:685.93px;top:437.45px;width:36.29px;height:36.15px;background:#d3dfcf"><div class="n" style="top:1.71px">89</div><div class="s" style="color:#1e7d45;top:13.32px">Lr</div><div class="m" style="top:24.91px">262</div></div><svg class="abs" style="left:0;top:0" width="1024" height="768"><line x1="68.25" y1="168.53" x2="106.04" y2="168.53" stroke="#6b6b7a" stroke-width="1.5"/><line x1="685.18" y1="168.53" x2="722.97" y2="168.53" stroke="#6b6b7a" stroke-width="1.5"/><line x1="68.25" y1="204.56" x2="106.04" y2="204.56" stroke="#6b6b7a" stroke-width="1.5"/><line x1="104.54" y1="204.56" x2="142.33" y2="204.56" stroke="#6b6b7a" stroke-width="1.5"/><line x1="503.73" y1="204.56" x2="541.52" y2="204.56" stroke="#6b6b7a" stroke-width="1.5"/><line x1="540.02" y1="204.56" x2="577.81" y2="204.56" stroke="#6b6b7a" stroke-width="1.5"/><line x1="576.31" y1="204.56" x2="614.10" y2="204.56" stroke="#6b6b7a" stroke-width="1.5"/><line x1="612.60" y1="204.56" x2="650.39" y2="204.56" stroke="#6b6b7a" stroke-width="1.5"/><line x1="648.89" y1="204.56" x2="686.68" y2="204.56" stroke="#6b6b7a" stroke-width="1.5"/><line x1="685.18" y1="204.56" x2="722.97" y2="204.56" stroke="#6b6b7a" stroke-width="1.5"/><line x1="68.25" y1="240.59" x2="106.04" y2="240.59" stroke="#6b6b7a" stroke-width="1.5"/><line x1="104.54" y1="240.59" x2="142.33" y2="240.59" stroke="#6b6b7a" stroke-width="1.5"/><line x1="503.73" y1="240.59" x2="541.52" y2="240.59" stroke="#6b6b7a" stroke-width="1.5"/><line x1="540.02" y1="240.59" x2="577.81" y2="240.59" stroke="#6b6b7a" stroke-width="1.5"/><line x1="576.31" y1="240.59" x2="614.10" y2="240.59" stroke="#6b6b7a" stroke-width="1.5"/><line x1="612.60" y1="240.59" x2="650.39" y2="240.59" stroke="#6b6b7a" stroke-width="1.5"/><line x1="648.89" y1="240.59" x2="686.68" y2="240.59" stroke="#6b6b7a" stroke-width="1.5"/><line x1="685.18" y1="240.59" x2="722.97" y2="240.59" stroke="#6b6b7a" stroke-width="1.5"/><line x1="68.25" y1="276.62" x2="106.04" y2="276.62" stroke="#6b6b7a" stroke-width="1.5"/><line x1="104.54" y1="276.62" x2="142.33" y2="276.62" stroke="#6b6b7a" stroke-width="1.5"/><line x1="140.83" y1="276.62" x2="178.62" y2="276.62" stroke="#8c7c5c" stroke-width="1.5"/><line x1="177.12" y1="276.62" x2="214.91" y2="276.62" stroke="#8c7c5c" stroke-width="1.5"/><line x1="213.41" y1="276.62" x2="251.20" y2="276.62" stroke="#8c7c5c" stroke-width="1.5"/><line x1="249.70" y1="276.62" x2="287.49" y2="276.62" stroke="#8c7c5c" stroke-width="1.5"/><line x1="285.99" y1="276.62" x2="323.78" y2="276.62" stroke="#8c7c5c" stroke-width="1.5"/><line x1="322.28" y1="276.62" x2="360.07" y2="276.62" stroke="#8c7c5c" stroke-width="1.5"/><line x1="358.57" y1="276.62" x2="396.36" y2="276.62" stroke="#8c7c5c" stroke-width="1.5"/><line x1="394.86" y1="276.62" x2="432.65" y2="276.62" stroke="#8c7c5c" stroke-width="1.5"/><line x1="431.15" y1="276.62" x2="468.94" y2="276.62" stroke="#8c7c5c" stroke-width="1.5"/><line x1="467.44" y1="276.62" x2="505.23" y2="276.62" stroke="#8c7c5c" stroke-width="1.5"/><line x1="503.73" y1="276.62" x2="541.52" y2="276.62" stroke="#6b6b7a" stroke-width="1.5"/><line x1="540.02" y1="276.62" x2="577.81" y2="276.62" stroke="#6b6b7a" stroke-width="1.5"/><line x1="576.31" y1="276.62" x2="614.10" y2="276.62" stroke="#6b6b7a" stroke-width="1.5"/><line x1="612.60" y1="276.62" x2="650.39" y2="276.62" stroke="#6b6b7a" stroke-width="1.5"/><line x1="648.89" y1="276.62" x2="686.68" y2="276.62" stroke="#6b6b7a" stroke-width="1.5"/><line x1="685.18" y1="276.62" x2="722.97" y2="276.62" stroke="#6b6b7a" stroke-width="1.5"/><line x1="68.25" y1="312.65" x2="106.04" y2="312.65" stroke="#6b6b7a" stroke-width="1.5"/><line x1="104.54" y1="312.65" x2="142.33" y2="312.65" stroke="#6b6b7a" stroke-width="1.5"/><line x1="140.83" y1="312.65" x2="178.62" y2="312.65" stroke="#8c7c5c" stroke-width="1.5"/><line x1="177.12" y1="312.65" x2="214.91" y2="312.65" stroke="#8c7c5c" stroke-width="1.5"/><line x1="213.41" y1="312.65" x2="251.20" y2="312.65" stroke="#8c7c5c" stroke-width="1.5"/><line x1="249.70" y1="312.65" x2="287.49" y2="312.65" stroke="#8c7c5c" stroke-width="1.5"/><line x1="285.99" y1="312.65" x2="323.78" y2="312.65" stroke="#8c7c5c" stroke-width="1.5"/><line x1="322.28" y1="312.65" x2="360.07" y2="312.65" stroke="#8c7c5c" stroke-width="1.5"/><line x1="358.57" y1="312.65" x2="396.36" y2="312.65" stroke="#8c7c5c" stroke-width="1.5"/><line x1="394.86" y1="312.65" x2="432.65" y2="312.65" stroke="#8c7c5c" stroke-width="1.5"/><line x1="431.15" y1="312.65" x2="468.94" y2="312.65" stroke="#8c7c5c" stroke-width="1.5"/><line x1="467.44" y1="312.65" x2="505.23" y2="312.65" stroke="#8c7c5c" stroke-width="1.5"/><line x1="503.73" y1="312.65" x2="541.52" y2="312.65" stroke="#6b6b7a" stroke-width="1.5"/><line x1="540.02" y1="312.65" x2="577.81" y2="312.65" stroke="#6b6b7a" stroke-width="1.5"/><line x1="576.31" y1="312.65" x2="614.10" y2="312.65" stroke="#6b6b7a" stroke-width="1.5"/><line x1="612.60" y1="312.65" x2="650.39" y2="312.65" stroke="#6b6b7a" stroke-width="1.5"/><line x1="648.89" y1="312.65" x2="686.68" y2="312.65" stroke="#6b6b7a" stroke-width="1.5"/><line x1="685.18" y1="312.65" x2="722.97" y2="312.65" stroke="#6b6b7a" stroke-width="1.5"/><line x1="68.25" y1="348.68" x2="106.04" y2="348.68" stroke="#6b6b7a" stroke-width="1.5"/><line x1="104.54" y1="348.68" x2="142.33" y2="348.68" stroke="#6b6b7a" stroke-width="1.5"/><line x1="140.83" y1="348.68" x2="178.62" y2="348.68" stroke="#8c7c5c" stroke-width="1.5"/><line x1="177.12" y1="348.68" x2="214.91" y2="348.68" stroke="#8c7c5c" stroke-width="1.5"/><line x1="213.41" y1="348.68" x2="251.20" y2="348.68" stroke="#8c7c5c" stroke-width="1.5"/><line x1="249.70" y1="348.68" x2="287.49" y2="348.68" stroke="#8c7c5c" stroke-width="1.5"/><line x1="285.99" y1="348.68" x2="323.78" y2="348.68" stroke="#8c7c5c" stroke-width="1.5"/><line x1="322.28" y1="348.68" x2="360.07" y2="348.68" stroke="#8c7c5c" stroke-width="1.5"/><line x1="358.57" y1="348.68" x2="396.36" y2="348.68" stroke="#8c7c5c" stroke-width="1.5"/><line x1="394.86" y1="348.68" x2="432.65" y2="348.68" stroke="#8c7c5c" stroke-width="1.5"/><line x1="431.15" y1="348.68" x2="468.94" y2="348.68" stroke="#8c7c5c" stroke-width="1.5"/><line x1="467.44" y1="348.68" x2="505.23" y2="348.68" stroke="#8c7c5c" stroke-width="1.5"/><line x1="503.73" y1="348.68" x2="541.52" y2="348.68" stroke="#6b6b7a" stroke-width="1.5"/><line x1="540.02" y1="348.68" x2="577.81" y2="348.68" stroke="#6b6b7a" stroke-width="1.5"/><line x1="576.31" y1="348.68" x2="614.10" y2="348.68" stroke="#6b6b7a" stroke-width="1.5"/><line x1="612.60" y1="348.68" x2="650.39" y2="348.68" stroke="#6b6b7a" stroke-width="1.5"/><line x1="648.89" y1="348.68" x2="686.68" y2="348.68" stroke="#6b6b7a" stroke-width="1.5"/><line x1="685.18" y1="348.68" x2="722.97" y2="348.68" stroke="#6b6b7a" stroke-width="1.5"/><line x1="213.41" y1="437.45" x2="251.20" y2="437.45" stroke="#55625a" stroke-width="1.5"/><line x1="249.70" y1="437.45" x2="287.49" y2="437.45" stroke="#55625a" stroke-width="1.5"/><line x1="285.99" y1="437.45" x2="323.78" y2="437.45" stroke="#55625a" stroke-width="1.5"/><line x1="322.28" y1="437.45" x2="360.07" y2="437.45" stroke="#55625a" stroke-width="1.5"/><line x1="358.57" y1="437.45" x2="396.36" y2="437.45" stroke="#55625a" stroke-width="1.5"/><line x1="394.86" y1="437.45" x2="432.65" y2="437.45" stroke="#55625a" stroke-width="1.5"/><line x1="431.15" y1="437.45" x2="468.94" y2="437.45" stroke="#55625a" stroke-width="1.5"/><line x1="467.44" y1="437.45" x2="505.23" y2="437.45" stroke="#55625a" stroke-width="1.5"/><line x1="503.73" y1="437.45" x2="541.52" y2="437.45" stroke="#55625a" stroke-width="1.5"/><line x1="540.02" y1="437.45" x2="577.81" y2="437.45" stroke="#55625a" stroke-width="1.5"/><line x1="576.31" y1="437.45" x2="614.10" y2="437.45" stroke="#55625a" stroke-width="1.5"/><line x1="612.60" y1="437.45" x2="650.39" y2="437.45" stroke="#55625a" stroke-width="1.5"/><line x1="648.89" y1="437.45" x2="686.68" y2="437.45" stroke="#55625a" stroke-width="1.5"/><line x1="685.18" y1="437.45" x2="722.97" y2="437.45" stroke="#55625a" stroke-width="1.5"/><line x1="105.29" y1="167.78" x2="105.29" y2="205.31" stroke="#6b6b7a" stroke-width="1.5"/><line x1="540.77" y1="167.78" x2="540.77" y2="205.31" stroke="#6b6b7a" stroke-width="1.5"/><line x1="577.06" y1="167.78" x2="577.06" y2="205.31" stroke="#6b6b7a" stroke-width="1.5"/><line x1="613.35" y1="167.78" x2="613.35" y2="205.31" stroke="#6b6b7a" stroke-width="1.5"/><line x1="649.64" y1="167.78" x2="649.64" y2="205.31" stroke="#6b6b7a" stroke-width="1.5"/><line x1="685.93" y1="167.78" x2="685.93" y2="205.31" stroke="#6b6b7a" stroke-width="1.5"/><line x1="105.29" y1="203.81" x2="105.29" y2="241.34" stroke="#6b6b7a" stroke-width="1.5"/><line x1="540.77" y1="203.81" x2="540.77" y2="241.34" stroke="#6b6b7a" stroke-width="1.5"/><line x1="577.06" y1="203.81" x2="577.06" y2="241.34" stroke="#6b6b7a" stroke-width="1.5"/><line x1="613.35" y1="203.81" x2="613.35" y2="241.34" stroke="#6b6b7a" stroke-width="1.5"/><line x1="649.64" y1="203.81" x2="649.64" y2="241.34" stroke="#6b6b7a" stroke-width="1.5"/><line x1="685.93" y1="203.81" x2="685.93" y2="241.34" stroke="#6b6b7a" stroke-width="1.5"/><line x1="105.29" y1="239.84" x2="105.29" y2="277.37" stroke="#6b6b7a" stroke-width="1.5"/><line x1="141.58" y1="239.84" x2="141.58" y2="277.37" stroke="#5a5048" stroke-width="1.5"/><line x1="177.87" y1="239.84" x2="177.87" y2="277.37" stroke="#8c7c5c" stroke-width="1.5"/><line x1="214.16" y1="239.84" x2="214.16" y2="277.37" stroke="#8c7c5c" stroke-width="1.5"/><line x1="250.45" y1="239.84" x2="250.45" y2="277.37" stroke="#8c7c5c" stroke-width="1.5"/><line x1="286.74" y1="239.84" x2="286.74" y2="277.37" stroke="#8c7c5c" stroke-width="1.5"/><line x1="323.03" y1="239.84" x2="323.03" y2="277.37" stroke="#8c7c5c" stroke-width="1.5"/><line x1="359.32" y1="239.84" x2="359.32" y2="277.37" stroke="#8c7c5c" stroke-width="1.5"/><line x1="395.61" y1="239.84" x2="395.61" y2="277.37" stroke="#8c7c5c" stroke-width="1.5"/><line x1="431.90" y1="239.84" x2="431.90" y2="277.37" stroke="#8c7c5c" stroke-width="1.5"/><line x1="468.19" y1="239.84" x2="468.19" y2="277.37" stroke="#8c7c5c" stroke-width="1.5"/><line x1="504.48" y1="239.84" x2="504.48" y2="277.37" stroke="#5a5048" stroke-width="1.5"/><line x1="540.77" y1="239.84" x2="540.77" y2="277.37" stroke="#6b6b7a" stroke-width="1.5"/><line x1="577.06" y1="239.84" x2="577.06" y2="277.37" stroke="#6b6b7a" stroke-width="1.5"/><line x1="613.35" y1="239.84" x2="613.35" y2="277.37" stroke="#6b6b7a" stroke-width="1.5"/><line x1="649.64" y1="239.84" x2="649.64" y2="277.37" stroke="#6b6b7a" stroke-width="1.5"/><line x1="685.93" y1="239.84" x2="685.93" y2="277.37" stroke="#6b6b7a" stroke-width="1.5"/><line x1="105.29" y1="275.87" x2="105.29" y2="313.40" stroke="#6b6b7a" stroke-width="1.5"/><line x1="141.58" y1="275.87" x2="141.58" y2="313.40" stroke="#5a5048" stroke-width="1.5"/><line x1="177.87" y1="275.87" x2="177.87" y2="313.40" stroke="#8c7c5c" stroke-width="1.5"/><line x1="214.16" y1="275.87" x2="214.16" y2="313.40" stroke="#8c7c5c" stroke-width="1.5"/><line x1="250.45" y1="275.87" x2="250.45" y2="313.40" stroke="#8c7c5c" stroke-width="1.5"/><line x1="286.74" y1="275.87" x2="286.74" y2="313.40" stroke="#8c7c5c" stroke-width="1.5"/><line x1="323.03" y1="275.87" x2="323.03" y2="313.40" stroke="#8c7c5c" stroke-width="1.5"/><line x1="359.32" y1="275.87" x2="359.32" y2="313.40" stroke="#8c7c5c" stroke-width="1.5"/><line x1="395.61" y1="275.87" x2="395.61" y2="313.40" stroke="#8c7c5c" stroke-width="1.5"/><line x1="431.90" y1="275.87" x2="431.90" y2="313.40" stroke="#8c7c5c" stroke-width="1.5"/><line x1="468.19" y1="275.87" x2="468.19" y2="313.40" stroke="#8c7c5c" stroke-width="1.5"/><line x1="504.48" y1="275.87" x2="504.48" y2="313.40" stroke="#5a5048" stroke-width="1.5"/><line x1="540.77" y1="275.87" x2="540.77" y2="313.40" stroke="#6b6b7a" stroke-width="1.5"/><line x1="577.06" y1="275.87" x2="577.06" y2="313.40" stroke="#6b6b7a" stroke-width="1.5"/><line x1="613.35" y1="275.87" x2="613.35" y2="313.40" stroke="#6b6b7a" stroke-width="1.5"/><line x1="649.64" y1="275.87" x2="649.64" y2="313.40" stroke="#6b6b7a" stroke-width="1.5"/><line x1="685.93" y1="275.87" x2="685.93" y2="313.40" stroke="#6b6b7a" stroke-width="1.5"/><line x1="105.29" y1="311.90" x2="105.29" y2="349.43" stroke="#6b6b7a" stroke-width="1.5"/><line x1="141.58" y1="311.90" x2="141.58" y2="349.43" stroke="#5a5048" stroke-width="1.5"/><line x1="177.87" y1="311.90" x2="177.87" y2="349.43" stroke="#8c7c5c" stroke-width="1.5"/><line x1="214.16" y1="311.90" x2="214.16" y2="349.43" stroke="#8c7c5c" stroke-width="1.5"/><line x1="250.45" y1="311.90" x2="250.45" y2="349.43" stroke="#8c7c5c" stroke-width="1.5"/><line x1="286.74" y1="311.90" x2="286.74" y2="349.43" stroke="#8c7c5c" stroke-width="1.5"/><line x1="323.03" y1="311.90" x2="323.03" y2="349.43" stroke="#8c7c5c" stroke-width="1.5"/><line x1="359.32" y1="311.90" x2="359.32" y2="349.43" stroke="#8c7c5c" stroke-width="1.5"/><line x1="395.61" y1="311.90" x2="395.61" y2="349.43" stroke="#8c7c5c" stroke-width="1.5"/><line x1="431.90" y1="311.90" x2="431.90" y2="349.43" stroke="#8c7c5c" stroke-width="1.5"/><line x1="468.19" y1="311.90" x2="468.19" y2="349.43" stroke="#8c7c5c" stroke-width="1.5"/><line x1="504.48" y1="311.90" x2="504.48" y2="349.43" stroke="#5a5048" stroke-width="1.5"/><line x1="540.77" y1="311.90" x2="540.77" y2="349.43" stroke="#6b6b7a" stroke-width="1.5"/><line x1="577.06" y1="311.90" x2="577.06" y2="349.43" stroke="#6b6b7a" stroke-width="1.5"/><line x1="613.35" y1="311.90" x2="613.35" y2="349.43" stroke="#6b6b7a" stroke-width="1.5"/><line x1="649.64" y1="311.90" x2="649.64" y2="349.43" stroke="#6b6b7a" stroke-width="1.5"/><line x1="685.93" y1="311.90" x2="685.93" y2="349.43" stroke="#6b6b7a" stroke-width="1.5"/><line x1="105.29" y1="347.93" x2="105.29" y2="385.46" stroke="#6b6b7a" stroke-width="1.5"/><line x1="141.58" y1="347.93" x2="141.58" y2="385.46" stroke="#5a5048" stroke-width="1.5"/><line x1="177.87" y1="347.93" x2="177.87" y2="385.46" stroke="#8c7c5c" stroke-width="1.5"/><line x1="214.16" y1="347.93" x2="214.16" y2="385.46" stroke="#8c7c5c" stroke-width="1.5"/><line x1="250.45" y1="347.93" x2="250.45" y2="385.46" stroke="#8c7c5c" stroke-width="1.5"/><line x1="286.74" y1="347.93" x2="286.74" y2="385.46" stroke="#8c7c5c" stroke-width="1.5"/><line x1="323.03" y1="347.93" x2="323.03" y2="385.46" stroke="#8c7c5c" stroke-width="1.5"/><line x1="359.32" y1="347.93" x2="359.32" y2="385.46" stroke="#8c7c5c" stroke-width="1.5"/><line x1="395.61" y1="347.93" x2="395.61" y2="385.46" stroke="#8c7c5c" stroke-width="1.5"/><line x1="431.90" y1="347.93" x2="431.90" y2="385.46" stroke="#8c7c5c" stroke-width="1.5"/><line x1="468.19" y1="347.93" x2="468.19" y2="385.46" stroke="#8c7c5c" stroke-width="1.5"/><line x1="504.48" y1="347.93" x2="504.48" y2="385.46" stroke="#5a5048" stroke-width="1.5"/><line x1="540.77" y1="347.93" x2="540.77" y2="385.46" stroke="#777" stroke-width="1.5"/><line x1="577.06" y1="347.93" x2="577.06" y2="385.46" stroke="#6b6b7a" stroke-width="1.5"/><line x1="613.35" y1="347.93" x2="613.35" y2="385.46" stroke="#777" stroke-width="1.5"/><line x1="649.64" y1="347.93" x2="649.64" y2="385.46" stroke="#6b6b7a" stroke-width="1.5"/><line x1="685.93" y1="347.93" x2="685.93" y2="385.46" stroke="#777" stroke-width="1.5"/><line x1="250.45" y1="400.55" x2="250.45" y2="438.20" stroke="#55625a" stroke-width="1.5"/><line x1="286.74" y1="400.55" x2="286.74" y2="438.20" stroke="#55625a" stroke-width="1.5"/><line x1="323.03" y1="400.55" x2="323.03" y2="438.20" stroke="#55625a" stroke-width="1.5"/><line x1="359.32" y1="400.55" x2="359.32" y2="438.20" stroke="#55625a" stroke-width="1.5"/><line x1="395.61" y1="400.55" x2="395.61" y2="438.20" stroke="#55625a" stroke-width="1.5"/><line x1="431.90" y1="400.55" x2="431.90" y2="438.20" stroke="#55625a" stroke-width="1.5"/><line x1="468.19" y1="400.55" x2="468.19" y2="438.20" stroke="#55625a" stroke-width="1.5"/><line x1="504.48" y1="400.55" x2="504.48" y2="438.20" stroke="#55625a" stroke-width="1.5"/><line x1="540.77" y1="400.55" x2="540.77" y2="438.20" stroke="#55625a" stroke-width="1.5"/><line x1="577.06" y1="400.55" x2="577.06" y2="438.20" stroke="#55625a" stroke-width="1.5"/><line x1="613.35" y1="400.55" x2="613.35" y2="438.20" stroke="#55625a" stroke-width="1.5"/><line x1="649.64" y1="400.55" x2="649.64" y2="438.20" stroke="#55625a" stroke-width="1.5"/><line x1="685.93" y1="400.55" x2="685.93" y2="438.20" stroke="#55625a" stroke-width="1.5"/><line x1="250.45" y1="436.70" x2="250.45" y2="474.35" stroke="#55625a" stroke-width="1.5"/><line x1="286.74" y1="436.70" x2="286.74" y2="474.35" stroke="#55625a" stroke-width="1.5"/><line x1="323.03" y1="436.70" x2="323.03" y2="474.35" stroke="#55625a" stroke-width="1.5"/><line x1="359.32" y1="436.70" x2="359.32" y2="474.35" stroke="#55625a" stroke-width="1.5"/><line x1="395.61" y1="436.70" x2="395.61" y2="474.35" stroke="#55625a" stroke-width="1.5"/><line x1="431.90" y1="436.70" x2="431.90" y2="474.35" stroke="#55625a" stroke-width="1.5"/><line x1="468.19" y1="436.70" x2="468.19" y2="474.35" stroke="#55625a" stroke-width="1.5"/><line x1="504.48" y1="436.70" x2="504.48" y2="474.35" stroke="#55625a" stroke-width="1.5"/><line x1="540.77" y1="436.70" x2="540.77" y2="474.35" stroke="#55625a" stroke-width="1.5"/><line x1="577.06" y1="436.70" x2="577.06" y2="474.35" stroke="#55625a" stroke-width="1.5"/><line x1="613.35" y1="436.70" x2="613.35" y2="474.35" stroke="#55625a" stroke-width="1.5"/><line x1="649.64" y1="436.70" x2="649.64" y2="474.35" stroke="#55625a" stroke-width="1.5"/><line x1="685.93" y1="436.70" x2="685.93" y2="474.35" stroke="#55625a" stroke-width="1.5"/><line x1="68.25" y1="132.50" x2="106.04" y2="132.50" stroke="#454545" stroke-width="1.6"/><line x1="685.18" y1="132.50" x2="722.97" y2="132.50" stroke="#454545" stroke-width="1.6"/><line x1="104.54" y1="168.53" x2="142.33" y2="168.53" stroke="#454545" stroke-width="1.6"/><line x1="503.73" y1="168.53" x2="541.52" y2="168.53" stroke="#454545" stroke-width="1.6"/><line x1="540.02" y1="168.53" x2="577.81" y2="168.53" stroke="#454545" stroke-width="1.6"/><line x1="576.31" y1="168.53" x2="614.10" y2="168.53" stroke="#454545" stroke-width="1.6"/><line x1="612.60" y1="168.53" x2="650.39" y2="168.53" stroke="#454545" stroke-width="1.6"/><line x1="648.89" y1="168.53" x2="686.68" y2="168.53" stroke="#454545" stroke-width="1.6"/><line x1="140.83" y1="240.59" x2="178.62" y2="240.59" stroke="#454545" stroke-width="1.6"/><line x1="177.12" y1="240.59" x2="214.91" y2="240.59" stroke="#454545" stroke-width="1.6"/><line x1="213.41" y1="240.59" x2="251.20" y2="240.59" stroke="#454545" stroke-width="1.6"/><line x1="249.70" y1="240.59" x2="287.49" y2="240.59" stroke="#454545" stroke-width="1.6"/><line x1="285.99" y1="240.59" x2="323.78" y2="240.59" stroke="#454545" stroke-width="1.6"/><line x1="322.28" y1="240.59" x2="360.07" y2="240.59" stroke="#454545" stroke-width="1.6"/><line x1="358.57" y1="240.59" x2="396.36" y2="240.59" stroke="#454545" stroke-width="1.6"/><line x1="394.86" y1="240.59" x2="432.65" y2="240.59" stroke="#454545" stroke-width="1.6"/><line x1="431.15" y1="240.59" x2="468.94" y2="240.59" stroke="#454545" stroke-width="1.6"/><line x1="467.44" y1="240.59" x2="505.23" y2="240.59" stroke="#454545" stroke-width="1.6"/><line x1="68.25" y1="384.71" x2="106.04" y2="384.71" stroke="#454545" stroke-width="1.6"/><line x1="104.54" y1="384.71" x2="142.33" y2="384.71" stroke="#454545" stroke-width="1.6"/><line x1="140.83" y1="384.71" x2="178.62" y2="384.71" stroke="#454545" stroke-width="1.6"/><line x1="177.12" y1="384.71" x2="214.91" y2="384.71" stroke="#454545" stroke-width="1.6"/><line x1="213.41" y1="384.71" x2="251.20" y2="384.71" stroke="#454545" stroke-width="1.6"/><line x1="249.70" y1="384.71" x2="287.49" y2="384.71" stroke="#454545" stroke-width="1.6"/><line x1="285.99" y1="384.71" x2="323.78" y2="384.71" stroke="#454545" stroke-width="1.6"/><line x1="322.28" y1="384.71" x2="360.07" y2="384.71" stroke="#454545" stroke-width="1.6"/><line x1="358.57" y1="384.71" x2="396.36" y2="384.71" stroke="#454545" stroke-width="1.6"/><line x1="394.86" y1="384.71" x2="432.65" y2="384.71" stroke="#454545" stroke-width="1.6"/><line x1="431.15" y1="384.71" x2="468.94" y2="384.71" stroke="#454545" stroke-width="1.6"/><line x1="467.44" y1="384.71" x2="505.23" y2="384.71" stroke="#454545" stroke-width="1.6"/><line x1="503.73" y1="384.71" x2="541.52" y2="384.71" stroke="#454545" stroke-width="1.6"/><line x1="540.02" y1="384.71" x2="577.81" y2="384.71" stroke="#454545" stroke-width="1.6"/><line x1="576.31" y1="384.71" x2="614.10" y2="384.71" stroke="#454545" stroke-width="1.6"/><line x1="612.60" y1="384.71" x2="650.39" y2="384.71" stroke="#454545" stroke-width="1.6"/><line x1="648.89" y1="384.71" x2="686.68" y2="384.71" stroke="#454545" stroke-width="1.6"/><line x1="685.18" y1="384.71" x2="722.97" y2="384.71" stroke="#454545" stroke-width="1.6"/><line x1="213.41" y1="401.30" x2="251.20" y2="401.30" stroke="#454545" stroke-width="1.6"/><line x1="249.70" y1="401.30" x2="287.49" y2="401.30" stroke="#454545" stroke-width="1.6"/><line x1="285.99" y1="401.30" x2="323.78" y2="401.30" stroke="#454545" stroke-width="1.6"/><line x1="322.28" y1="401.30" x2="360.07" y2="401.30" stroke="#454545" stroke-width="1.6"/><line x1="358.57" y1="401.30" x2="396.36" y2="401.30" stroke="#454545" stroke-width="1.6"/><line x1="394.86" y1="401.30" x2="432.65" y2="401.30" stroke="#454545" stroke-width="1.6"/><line x1="431.15" y1="401.30" x2="468.94" y2="401.30" stroke="#454545" stroke-width="1.6"/><line x1="467.44" y1="401.30" x2="505.23" y2="401.30" stroke="#454545" stroke-width="1.6"/><line x1="503.73" y1="401.30" x2="541.52" y2="401.30" stroke="#454545" stroke-width="1.6"/><line x1="540.02" y1="401.30" x2="577.81" y2="401.30" stroke="#454545" stroke-width="1.6"/><line x1="576.31" y1="401.30" x2="614.10" y2="401.30" stroke="#454545" stroke-width="1.6"/><line x1="612.60" y1="401.30" x2="650.39" y2="401.30" stroke="#454545" stroke-width="1.6"/><line x1="648.89" y1="401.30" x2="686.68" y2="401.30" stroke="#454545" stroke-width="1.6"/><line x1="685.18" y1="401.30" x2="722.97" y2="401.30" stroke="#454545" stroke-width="1.6"/><line x1="213.41" y1="473.60" x2="251.20" y2="473.60" stroke="#454545" stroke-width="1.6"/><line x1="249.70" y1="473.60" x2="287.49" y2="473.60" stroke="#454545" stroke-width="1.6"/><line x1="285.99" y1="473.60" x2="323.78" y2="473.60" stroke="#454545" stroke-width="1.6"/><line x1="322.28" y1="473.60" x2="360.07" y2="473.60" stroke="#454545" stroke-width="1.6"/><line x1="358.57" y1="473.60" x2="396.36" y2="473.60" stroke="#454545" stroke-width="1.6"/><line x1="394.86" y1="473.60" x2="432.65" y2="473.60" stroke="#454545" stroke-width="1.6"/><line x1="431.15" y1="473.60" x2="468.94" y2="473.60" stroke="#454545" stroke-width="1.6"/><line x1="467.44" y1="473.60" x2="505.23" y2="473.60" stroke="#454545" stroke-width="1.6"/><line x1="503.73" y1="473.60" x2="541.52" y2="473.60" stroke="#454545" stroke-width="1.6"/><line x1="540.02" y1="473.60" x2="577.81" y2="473.60" stroke="#454545" stroke-width="1.6"/><line x1="576.31" y1="473.60" x2="614.10" y2="473.60" stroke="#454545" stroke-width="1.6"/><line x1="612.60" y1="473.60" x2="650.39" y2="473.60" stroke="#454545" stroke-width="1.6"/><line x1="648.89" y1="473.60" x2="686.68" y2="473.60" stroke="#454545" stroke-width="1.6"/><line x1="685.18" y1="473.60" x2="722.97" y2="473.60" stroke="#454545" stroke-width="1.6"/><line x1="69.00" y1="131.75" x2="69.00" y2="169.28" stroke="#454545" stroke-width="1.6"/><line x1="105.29" y1="131.75" x2="105.29" y2="169.28" stroke="#454545" stroke-width="1.6"/><line x1="685.93" y1="131.75" x2="685.93" y2="169.28" stroke="#454545" stroke-width="1.6"/><line x1="722.22" y1="131.75" x2="722.22" y2="169.28" stroke="#454545" stroke-width="1.6"/><line x1="69.00" y1="167.78" x2="69.00" y2="205.31" stroke="#454545" stroke-width="1.6"/><line x1="141.58" y1="167.78" x2="141.58" y2="205.31" stroke="#454545" stroke-width="1.6"/><line x1="504.48" y1="167.78" x2="504.48" y2="205.31" stroke="#454545" stroke-width="1.6"/><line x1="722.22" y1="167.78" x2="722.22" y2="205.31" stroke="#454545" stroke-width="1.6"/><line x1="69.00" y1="203.81" x2="69.00" y2="241.34" stroke="#454545" stroke-width="1.6"/><line x1="141.58" y1="203.81" x2="141.58" y2="241.34" stroke="#454545" stroke-width="1.6"/><line x1="504.48" y1="203.81" x2="504.48" y2="241.34" stroke="#454545" stroke-width="1.6"/><line x1="722.22" y1="203.81" x2="722.22" y2="241.34" stroke="#454545" stroke-width="1.6"/><line x1="69.00" y1="239.84" x2="69.00" y2="277.37" stroke="#454545" stroke-width="1.6"/><line x1="722.22" y1="239.84" x2="722.22" y2="277.37" stroke="#454545" stroke-width="1.6"/><line x1="69.00" y1="275.87" x2="69.00" y2="313.40" stroke="#454545" stroke-width="1.6"/><line x1="722.22" y1="275.87" x2="722.22" y2="313.40" stroke="#454545" stroke-width="1.6"/><line x1="69.00" y1="311.90" x2="69.00" y2="349.43" stroke="#454545" stroke-width="1.6"/><line x1="722.22" y1="311.90" x2="722.22" y2="349.43" stroke="#454545" stroke-width="1.6"/><line x1="69.00" y1="347.93" x2="69.00" y2="385.46" stroke="#454545" stroke-width="1.6"/><line x1="722.22" y1="347.93" x2="722.22" y2="385.46" stroke="#454545" stroke-width="1.6"/><line x1="214.16" y1="400.55" x2="214.16" y2="438.20" stroke="#454545" stroke-width="1.6"/><line x1="722.22" y1="400.55" x2="722.22" y2="438.20" stroke="#454545" stroke-width="1.6"/><line x1="214.16" y1="436.70" x2="214.16" y2="474.35" stroke="#454545" stroke-width="1.6"/><line x1="722.22" y1="436.70" x2="722.22" y2="474.35" stroke="#454545" stroke-width="1.6"/></svg><svg class="abs" style="left:0;top:0" width="1024" height="768" viewBox="0 0 1024 768">
<defs><linearGradient id="tg" x1="178" y1="0" x2="214" y2="0" gradientUnits="userSpaceOnUse"><stop offset="0" stop-color="#2cb2cf"/><stop offset="0.5" stop-color="#1893b3"/><stop offset="1" stop-color="#0c6a8a"/></linearGradient></defs>
<polygon points="177.8,334 180.3,334 183.8,401.3 214,401.3 214,473.5 177.8,417.3" fill="url(#tg)"/>
<path d="M339.5 235.6 V227.8 H414.4 V235.6 M377.1 227.8 V218.3" stroke="#6a6a6a" stroke-width="1.2" fill="none"/>
</svg><svg class="abs" style="left:0;top:0" width="1024" height="768" viewBox="0 0 1024 768"><g stroke="#202020" stroke-width="1.35" fill="none" stroke-linecap="round" stroke-linejoin="round"><path d="M786.1 120.5 C786.5 121.7 787.7 125.4 788.5 127.5 C789.3 129.6 790.1 132.1 790.8 133.0 C791.5 134.0 791.9 134.1 792.8 133.0 C793.7 132.0 795.0 128.9 796.1 127.0 C797.2 125.0 799.0 122.1 799.6 121.1"/><path d="M816.1 121.5 C815.9 121.2 815.5 119.9 814.6 119.8 C813.8 119.7 812.0 120.1 810.7 121.0 C809.4 121.9 807.8 123.6 806.8 124.9 C805.9 126.2 805.0 127.9 804.9 128.8 C804.8 129.7 805.4 130.4 806.3 130.5 C807.3 130.6 809.4 130.0 810.7 129.3 C812.1 128.6 813.6 127.3 814.6 126.4 C815.7 125.4 816.8 123.3 816.8 123.4 C816.8 123.6 815.3 126.2 814.6 127.3 C814.0 128.4 813.0 129.6 812.7 130.0"/><path d="M831.7 101.5 C831.0 103.8 828.7 110.8 827.3 115.6 C826.0 120.4 824.1 127.8 823.4 130.3"/><path d="M828.8 125.9 C829.5 125.5 831.8 124.1 833.2 123.4 C834.6 122.7 836.5 121.8 837.1 121.7 C837.7 121.6 837.6 122.3 836.6 122.9 C835.6 123.6 832.5 124.7 831.2 125.4 C830.0 126.1 829.5 126.6 829.3 127.3 C829.1 128.1 829.0 129.3 829.8 129.8 C830.6 130.3 832.4 130.6 834.2 130.3 C836.0 130.0 839.5 128.4 840.5 128.1"/><path d="M844.9 123.7 C844.6 124.3 843.8 126.4 843.4 127.6 C843.1 128.8 842.6 130.4 842.8 131.0 C843.1 131.6 844.0 131.6 844.9 131.2 C845.8 130.8 847.0 129.5 848.3 128.6 C849.6 127.6 852.1 125.2 852.7 125.4 C853.3 125.5 852.2 128.2 852.0 129.5 C851.8 130.8 851.6 132.6 851.5 133.2"/><path d="M866.6 121.7 C866.1 121.9 864.5 122.1 863.4 122.8 C862.4 123.4 861.2 124.5 860.5 125.6 C859.8 126.7 859.1 128.6 859.3 129.5 C859.4 130.4 860.1 130.8 861.5 131.0 C862.8 131.2 865.6 130.8 867.3 130.5 C869.1 130.3 870.3 130.1 872.2 129.5 C874.2 129.0 877.3 127.9 879.1 127.1 C880.9 126.3 882.4 125.5 883.0 124.6 C883.5 123.8 883.2 122.5 882.5 122.2 C881.7 121.9 880.0 122.2 878.6 122.8 C877.2 123.4 875.2 124.5 874.2 125.6 C873.2 126.7 872.7 128.5 872.7 129.5 C872.7 130.6 873.1 131.4 874.2 132.0 C875.2 132.5 877.4 133.0 879.1 132.9 C880.8 132.9 883.5 131.7 884.4 131.5"/><path d="M923.3 121.1 C922.6 120.8 920.5 119.2 919.3 119.3 C918.2 119.5 916.6 120.8 916.3 122.0 C916.0 123.1 916.9 125.1 917.6 126.4 C918.3 127.7 920.1 128.8 920.4 129.7 C920.7 130.6 920.2 131.5 919.3 131.6 C918.4 131.7 916.4 131.2 914.9 130.3 C913.5 129.4 911.5 127.6 910.5 126.4 C909.6 125.1 909.4 123.4 909.2 122.9"/><path d="M940.4 104.8 C940.1 106.7 939.4 112.8 938.7 115.8 C937.9 118.8 936.9 120.8 936.0 122.9 C935.2 124.9 933.8 127.2 933.4 128.1"/><path d="M933.8 127.7 C934.5 127.1 936.8 124.5 937.8 124.2 C938.8 123.8 939.7 124.7 940.0 125.5 C940.3 126.3 939.6 127.9 939.4 129.0 C939.2 130.1 938.8 131.6 938.7 132.1"/><path d="M945.7 125.7 C946.9 125.2 951.6 123.7 952.7 123.0 C953.9 122.4 953.4 121.9 952.7 121.8 C952.1 121.7 950.0 121.7 948.8 122.4 C947.6 123.2 946.1 125.0 945.7 126.4 C945.3 127.7 945.3 129.5 946.1 130.3 C947.0 131.1 948.6 131.7 951.0 131.2 C953.4 130.7 959.0 127.9 960.6 127.2"/><path d="M970.3 107.5 C969.7 109.6 968.0 116.3 966.8 120.2 C965.6 124.2 963.5 129.4 962.8 131.2"/><path d="M979.5 107.9 C979.2 109.8 978.1 115.7 977.3 119.3 C976.6 122.9 975.5 127.8 975.1 129.4"/><path d="M769.8 186.1 C770.1 184.6 770.9 180.2 771.5 176.9 C772.1 173.7 772.6 167.1 773.5 166.4 C774.4 165.8 775.7 171.3 776.9 172.9 C778.1 174.4 779.5 175.7 781.0 175.6 C782.4 175.5 784.3 173.7 785.7 172.2 C787.1 170.7 789.1 166.0 789.4 166.8 C789.8 167.6 788.5 173.5 787.7 176.9 C786.9 180.3 785.2 185.4 784.7 187.1"/><path d="M804.0 181.7 C803.3 181.4 801.3 180.1 799.9 180.3 C798.6 180.5 796.7 181.9 795.9 183.0 C795.1 184.2 794.7 186.3 795.2 187.1 C795.6 187.9 797.4 188.2 798.6 187.8 C799.7 187.3 801.1 185.4 802.0 184.4 C802.8 183.4 803.8 181.0 803.7 181.7 C803.5 182.4 802.4 186.1 801.3 188.4 C800.2 190.8 798.8 193.3 797.2 195.9 C795.6 198.5 792.9 201.8 791.8 204.0 C790.7 206.3 790.6 208.9 790.8 209.4 C791.0 210.0 792.1 209.3 793.2 207.4 C794.2 205.5 796.1 200.6 797.2 197.9 C798.4 195.2 799.0 192.5 799.9 191.2 C800.8 189.8 800.7 190.8 802.6 189.8 C804.6 188.8 810.0 185.9 811.4 185.1"/><path d="M860.6 177.6 C860.4 178.2 859.9 180.1 859.5 181.2 C859.1 182.4 858.3 184.0 858.1 184.5"/><path d="M859.2 182.7 C859.8 181.7 861.7 178.4 863.2 176.8 C864.7 175.3 867.1 173.8 868.3 173.5 C869.5 173.3 870.3 174.2 870.5 175.4 C870.8 176.5 870.1 178.9 869.8 180.5 C869.5 182.2 868.9 184.5 868.7 185.3"/><path d="M885.2 175.0 L892.5 173.9"/><path d="M886.3 180.5 L895.8 177.2"/><path d="M908.2 162.6 C909.3 162.5 912.5 161.8 914.5 162.2 C916.4 162.6 919.3 163.9 919.9 165.1 C920.6 166.3 919.5 168.2 918.1 169.5 C916.7 170.8 911.6 172.0 911.5 172.8 C911.4 173.7 916.0 173.7 917.4 174.6 C918.8 175.6 919.9 177.0 919.9 178.3 C919.9 179.7 918.8 181.7 917.4 182.7 C916.0 183.7 913.9 184.5 911.5 184.5 C909.1 184.6 904.5 183.3 903.1 183.1"/><path d="M777.3 234.4 C776.8 234.3 775.6 233.4 774.6 233.8 C773.7 234.1 772.5 235.2 771.5 236.4 C770.5 237.7 769.4 239.4 768.4 241.3 C767.5 243.1 766.3 245.6 765.8 247.5 C765.2 249.4 764.9 251.3 765.1 252.8 C765.2 254.3 765.7 255.5 766.6 256.3 C767.6 257.2 769.2 257.6 770.6 257.7 C772.1 257.8 774.1 257.5 775.5 257.0 C776.9 256.5 778.1 255.6 779.0 254.6 C780.0 253.6 781.0 252.1 781.3 251.0 C781.6 249.9 781.4 248.6 780.8 247.9 C780.2 247.3 779.0 247.1 777.7 247.0 C776.5 247.0 774.7 247.2 773.3 247.7 C771.9 248.2 770.3 249.1 769.3 250.1 C768.3 251.1 767.6 253.1 767.3 253.7"/><path d="M779.0 247.9 C778.9 248.9 778.4 251.8 778.2 253.7 C777.9 255.6 777.6 258.5 777.5 259.4"/><path d="M789.2 250.8 C790.0 250.3 792.2 248.8 793.7 247.9 C795.1 247.0 797.1 245.8 798.1 245.5 C799.1 245.2 799.6 245.8 799.6 246.2 C799.6 246.5 799.1 247.2 798.1 247.7 C797.1 248.2 795.1 248.7 793.7 249.3 C792.3 249.8 790.5 250.3 789.7 251.0 C788.9 251.7 788.6 252.7 788.8 253.5 C789.0 254.2 789.9 255.0 791.0 255.5 C792.1 255.9 794.0 256.1 795.4 256.1 C796.9 256.1 798.9 255.6 799.6 255.5"/><path d="M855.5 237.2 C855.3 238.1 854.8 240.9 854.4 242.7 C854.0 244.5 853.5 247.3 853.3 248.2"/><path d="M854.0 245.3 C854.8 244.4 857.1 241.2 858.8 239.8 C860.4 238.4 862.5 237.2 863.9 236.8 C865.3 236.5 866.8 237.0 867.2 237.9 C867.6 238.9 866.8 241.0 866.5 242.7 C866.1 244.4 865.3 247.3 865.0 248.2"/><path d="M880.4 237.2 L891.7 235.4"/><path d="M880.0 245.3 L890.3 241.6"/><path d="M907.1 224.8 C906.7 225.9 905.2 229.7 904.6 231.7 C904.0 233.7 903.3 236.0 903.5 236.8 C903.6 237.7 903.8 237.5 905.7 236.8 C907.5 236.2 913.0 233.5 914.5 232.8"/><path d="M918.5 224.4 C918.2 226.1 917.7 230.8 917.0 234.6 C916.3 238.5 914.9 245.3 914.5 247.5"/><path d="M119.7 212.3 C120.5 211.8 122.4 210.3 124.3 209.7 C126.3 209.1 128.9 208.6 131.5 208.7 C134.1 208.8 137.8 209.4 139.9 210.3 C142.1 211.2 143.4 212.5 144.5 213.9 C145.6 215.2 146.6 216.7 146.8 218.4 C147.0 220.2 146.6 222.0 145.8 224.3 C145.0 226.6 143.8 229.8 141.9 232.1 C139.9 234.4 136.8 236.7 134.1 238.0 C131.4 239.3 128.9 240.0 125.6 239.9 C122.4 239.8 117.7 238.7 114.5 237.3 C111.4 235.9 108.3 233.4 106.7 231.5 C105.1 229.5 104.9 228.1 105.1 225.6 C105.3 223.1 106.6 219.4 108.0 216.5 C109.5 213.6 112.3 210.0 113.9 208.0 C115.5 206.1 115.5 205.4 117.8 204.8 C120.1 204.2 123.9 204.4 127.6 204.4 C131.3 204.4 137.3 204.6 139.9 204.8 C142.5 205.0 142.4 205.2 143.2 205.7 C144.0 206.3 144.5 207.2 144.6 208.0 C144.8 208.8 144.2 210.2 144.2 210.6"/><path d="M549.5 245.4 C551.1 245.3 556.4 244.8 559.3 244.8 C562.2 244.8 564.9 244.8 567.1 245.4 C569.3 246.1 570.6 247.2 572.3 248.7 C574.0 250.1 576.0 252.2 577.2 254.2 C578.4 256.1 579.1 258.2 579.3 260.4 C579.5 262.5 579.1 265.2 578.3 267.2 C577.4 269.3 576.2 271.0 574.3 272.7 C572.3 274.5 569.2 276.5 566.4 277.8 C563.7 279.1 560.8 280.0 558.0 280.4 C555.2 280.9 552.2 281.2 549.5 280.6 C546.9 279.9 544.0 278.5 542.0 276.6 C540.0 274.8 538.4 271.9 537.5 269.5 C536.6 267.1 536.3 264.9 536.5 262.3 C536.7 259.8 537.1 256.9 538.5 254.2 C539.8 251.5 542.1 248.4 544.6 246.4 C547.1 244.3 550.8 242.7 553.4 241.8 C556.1 241.0 558.3 241.1 560.6 241.3 C562.9 241.5 565.4 242.1 567.1 242.8 C568.8 243.5 570.1 245.2 570.7 245.7"/></g></svg>
</body></html>
